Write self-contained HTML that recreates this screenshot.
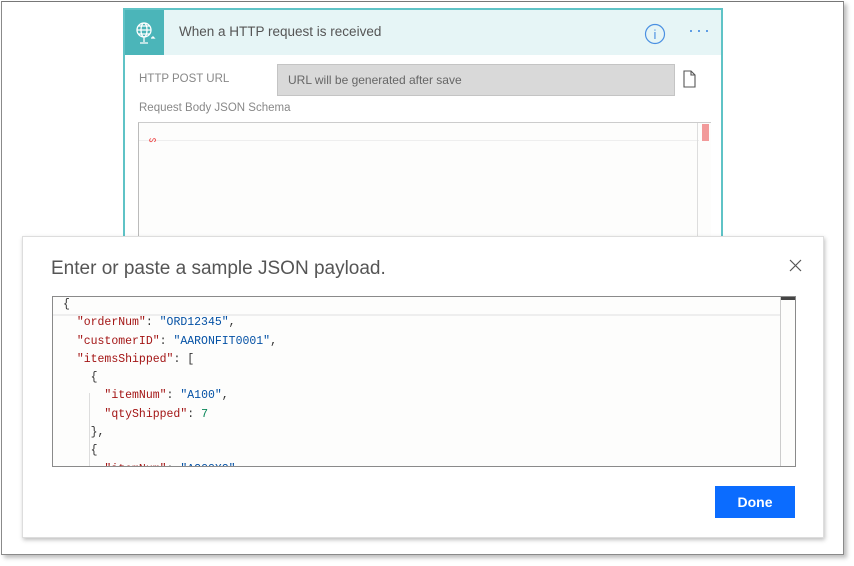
<!DOCTYPE html>
<html><head><style>
*{margin:0;padding:0;box-sizing:border-box}
body{width:854px;height:566px;background:#fff;position:relative;overflow:hidden;font-family:"Segoe UI","Liberation Sans",sans-serif}
.frame{position:absolute;left:1px;top:1px;width:843px;height:554px;border:1px solid #8a8a8a;border-top-color:#777;background:#fff;box-shadow:3px 3px 4px rgba(0,0,0,.25)}
.card{position:absolute;left:123px;top:8px;width:600px;height:240px;border:2px solid #5fc3c6;border-bottom:none;background:#fff}
.hdr{position:absolute;left:0;top:0;width:596px;height:45px;background:#e6f5f6}
.ico{position:absolute;left:0;top:0;width:39px;height:45px;background:#4bb5b9}
.ttl{position:absolute;left:54px;top:14px;font-size:13.5px;color:#555}
.lbl{position:absolute;font-size:11.5px;color:#888}
.url{position:absolute;left:152px;top:54px;width:398px;height:32px;background:#d9d9d9;border:1px solid #c4c4c4;font-size:12px;color:#666;padding:8px 10px}
.ed{position:absolute;left:13px;top:112px;width:573px;height:130px;border-left:1px solid #bbb;border-top:1px solid #ccc;background:#fdfdfc}
.dlg{position:absolute;left:22px;top:236px;width:802px;height:302px;background:#fff;border:1px solid #ddd;box-shadow:1px 2px 4px rgba(0,0,0,.25)}
.dt{position:absolute;left:28px;top:21px;font-size:19px;color:#555}
.code{position:absolute;left:29px;top:59px;width:744px;height:171px;border:1px solid #8a8a8a;background:#fdfdfc;overflow:hidden}
pre{font-family:"Liberation Mono",monospace;font-size:11.5px;line-height:18.3px;position:absolute;left:10px;top:-1px;color:#333}
.k{color:#a31515}.s{color:#0451a5}.n{color:#098658}
.done{position:absolute;left:692px;top:249px;width:80px;height:32px;background:#0b6cff;color:#fff;font-weight:bold;font-size:14px;text-align:center;line-height:32px}
</style></head><body>
<div class="frame"></div>
<div class="card">
 <div class="hdr"><div class="ico">
  <svg width="39" height="45" viewBox="0 0 39 45"><g fill="none" stroke="#fff" stroke-width="1.3"><circle cx="19" cy="20" r="7"/><ellipse cx="19" cy="20" rx="3" ry="7"/><path d="M12 20h14M13 16h12M13 24h12M19 27v5M15 33h8M26 28h3l-1.5-1.5"/></g></svg>
 </div>
 <div class="ttl">When a HTTP request is received</div>
 <svg style="position:absolute;left:519px;top:13px" width="22" height="22"><circle cx="11" cy="11" r="9.5" fill="none" stroke="#4a90e2" stroke-width="1.2"/><text x="11" y="16" font-size="13" fill="#4a90e2" text-anchor="middle" font-family="Liberation Sans">i</text></svg>
 <div style="position:absolute;left:563px;top:10px;color:#4a90e2;font-size:18px;letter-spacing:2px">···</div>
 </div>
 <div class="lbl" style="left:14px;top:63px">HTTP POST URL</div>
 <div class="url">URL will be generated after save</div>
 <svg style="position:absolute;left:558px;top:60px" width="14" height="18"><path d="M1 1h7l4 4v12H1z M8 1v4h4" fill="none" stroke="#555" stroke-width="1.1"/></svg>
 <div class="lbl" style="left:14px;top:92px">Request Body JSON Schema</div>
 <div class="ed">
  <div style="position:absolute;left:0;top:17px;width:560px;border-top:1px solid #eee"></div>
  <div style="position:absolute;left:558px;top:0;width:1px;height:130px;background:#ddd"></div>
  <div style="position:absolute;left:563px;top:1px;width:7px;height:17px;background:#f29a9a"></div>
  <div style="position:absolute;left:10px;top:12px;color:#e33;font-size:8px">ᔕ</div>
 </div>
</div>
<div class="dlg">
 <div class="dt">Enter or paste a sample JSON payload.</div>
 <svg style="position:absolute;left:766px;top:22px" width="13" height="13"><path d="M1 1L12 12M12 1L1 12" stroke="#555" stroke-width="1.2"/></svg>
 <div class="code">
  <div style="position:absolute;left:0;top:1px;width:728px;height:18px;border-bottom:2px solid #eee"></div>
  <div style="position:absolute;left:727px;top:0;width:1px;height:171px;background:#ccc"></div>
  <div style="position:absolute;left:728px;top:0;width:14px;height:3px;background:#444"></div>
  <div style="position:absolute;left:36px;top:96px;width:1px;height:74px;background:#ddd"></div>
<pre>{
  <span class="k">"orderNum"</span>: <span class="s">"ORD12345"</span>,
  <span class="k">"customerID"</span>: <span class="s">"AARONFIT0001"</span>,
  <span class="k">"itemsShipped"</span>: [
    {
      <span class="k">"itemNum"</span>: <span class="s">"A100"</span>,
      <span class="k">"qtyShipped"</span>: <span class="n">7</span>
    },
    {
      <span class="k">"itemNum"</span>: <span class="s">"A200X2"</span>,</pre>
 </div>
 <div class="done">Done</div>
</div>
</body></html>
